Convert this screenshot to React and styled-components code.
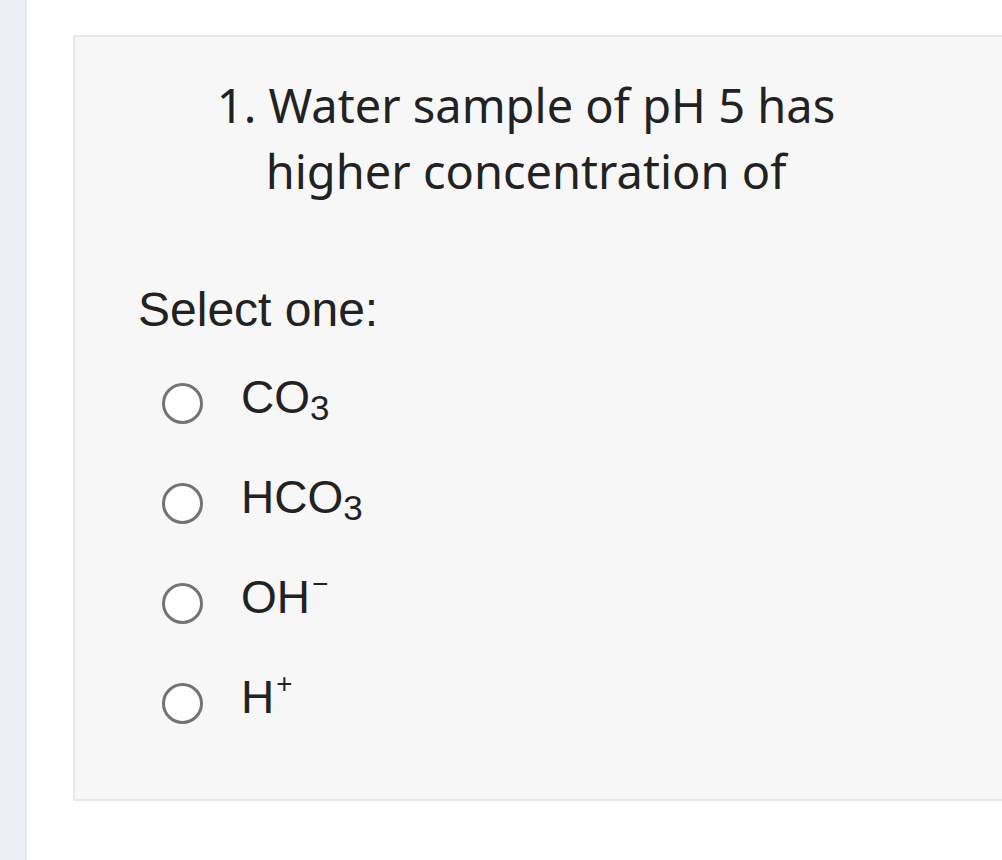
import React from 'react'
import styled, { createGlobalStyle } from 'styled-components'

const GlobalStyle = createGlobalStyle`
  html, body {
    margin: 0;
    padding: 0;
    background: #ffffff;
    overflow: hidden;
  }
`

const options = [
  { id: 'co3', label: 'CO', sub: '3' },
  { id: 'hco3', label: 'HCO', sub: '3' },
  { id: 'oh', label: 'OH', sup: '−' },
  { id: 'h', label: 'H', sup: '+' },
]

const App = () => {
  return (
    <Page>
      <GlobalStyle />
      <Sidebar />
      <Main>
        <Card>
          <Question>
            1. Water sample of pH 5 has
            <br />
            higher concentration of
          </Question>
          <Prompt>Select one:</Prompt>
          <OptionList>
            {options.map((opt) => (
              <Option key={opt.id}>
                <Radio />
                <Label>
                  {opt.label}
                  {opt.sub && <Sub>{opt.sub}</Sub>}
                  {opt.sup && <Sup>{opt.sup}</Sup>}
                </Label>
              </Option>
            ))}
          </OptionList>
        </Card>
      </Main>
    </Page>
  )
}

const Page = styled.div`
  display: flex;
  width: 100vw;
  height: 860px;
  background: #ffffff;
`
const Sidebar = styled.div`
  width: 25px;
  flex-shrink: 0;
  background: #edf1f5;
  border-right: 2px solid #e4e8ec;
`
const Main = styled.div`
  flex: 1;
  padding: 35px 0 0 46px;
  overflow: hidden;
`
const Card = styled.div`
  box-sizing: border-box;
  width: 1000px;
  height: 766px;
  padding: 35px 0 0 63px;
  background: #f7f7f7;
  border: 2px solid #e8e8e8;
`
const Question = styled.div`
  width: 776px;
  font-family: 'Noto Sans', 'Open Sans', sans-serif;
  font-size: 47px;
  line-height: 66px;
  color: #222222;
  text-align: center;
`
const Prompt = styled.div`
  margin-top: 78px;
  font-family: 'Liberation Sans', Arial, sans-serif;
  font-size: 48px;
  line-height: 55px;
  color: #222222;
`
const OptionList = styled.div`
  margin-top: 10px;
  display: flex;
  flex-direction: column;
`
const Option = styled.div`
  height: 100px;
  display: flex;
  align-items: center;
  padding-left: 24px;
`
const Radio = styled.span`
  box-sizing: border-box;
  width: 41px;
  height: 41px;
  margin-top: 12px;
  flex-shrink: 0;
  border-radius: 50%;
  border: 3px solid #737373;
  background: #ffffff;
`
const Label = styled.span`
  margin-left: 38px;
  font-family: 'Liberation Sans', Arial, sans-serif;
  font-size: 46px;
  line-height: 55px;
  color: #222222;
`
const Sub = styled.sub`
  font-size: 0.76em;
  vertical-align: -0.2em;
  line-height: 0;
`
const Sup = styled.sup`
  font-size: 0.6em;
  vertical-align: 0.7em;
  line-height: 0;
  margin-left: 2px;
`

export default App
